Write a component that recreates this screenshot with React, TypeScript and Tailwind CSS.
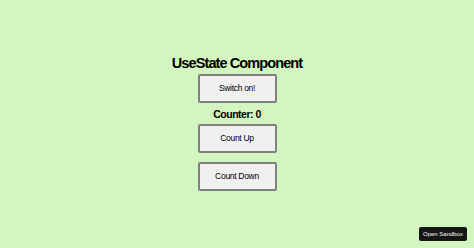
export default function App() {
  return (
    <div className="relative h-[248px] w-[474px] overflow-hidden bg-[#d3f5c0] font-['Liberation_Sans',Arial,sans-serif] text-black">
      <div className="flex flex-col items-center pt-[53px]">
        <h1 className="text-[14.5px] font-bold leading-5 tracking-[-0.9px]">UseState Component</h1>
        <button className="mt-[1px] h-[29px] w-[79px] rounded-[2px] border-2 border-[#808080] bg-[#f0f0f0] text-[8.5px] tracking-[-0.3px]">
          Switch on!
        </button>
        <p className="mt-[4px] text-[10.5px] font-bold leading-[15px] tracking-[-0.5px]">Counter: 0</p>
        <button className="mt-[2px] h-[29px] w-[79px] rounded-[2px] border-2 border-[#808080] bg-[#f0f0f0] text-[8.5px] tracking-[-0.3px]">
          Count Up
        </button>
        <button className="mt-[9px] h-[29px] w-[79px] rounded-[2px] border-2 border-[#808080] bg-[#f0f0f0] text-[8.5px] tracking-[-0.3px]">
          Count Down
        </button>
      </div>
      <button className="absolute bottom-[7px] right-[7px] h-[14px] rounded-[2px] bg-[#151515] px-[4px] text-[6px] text-white">
        Open Sandbox
      </button>
    </div>
  )
}
